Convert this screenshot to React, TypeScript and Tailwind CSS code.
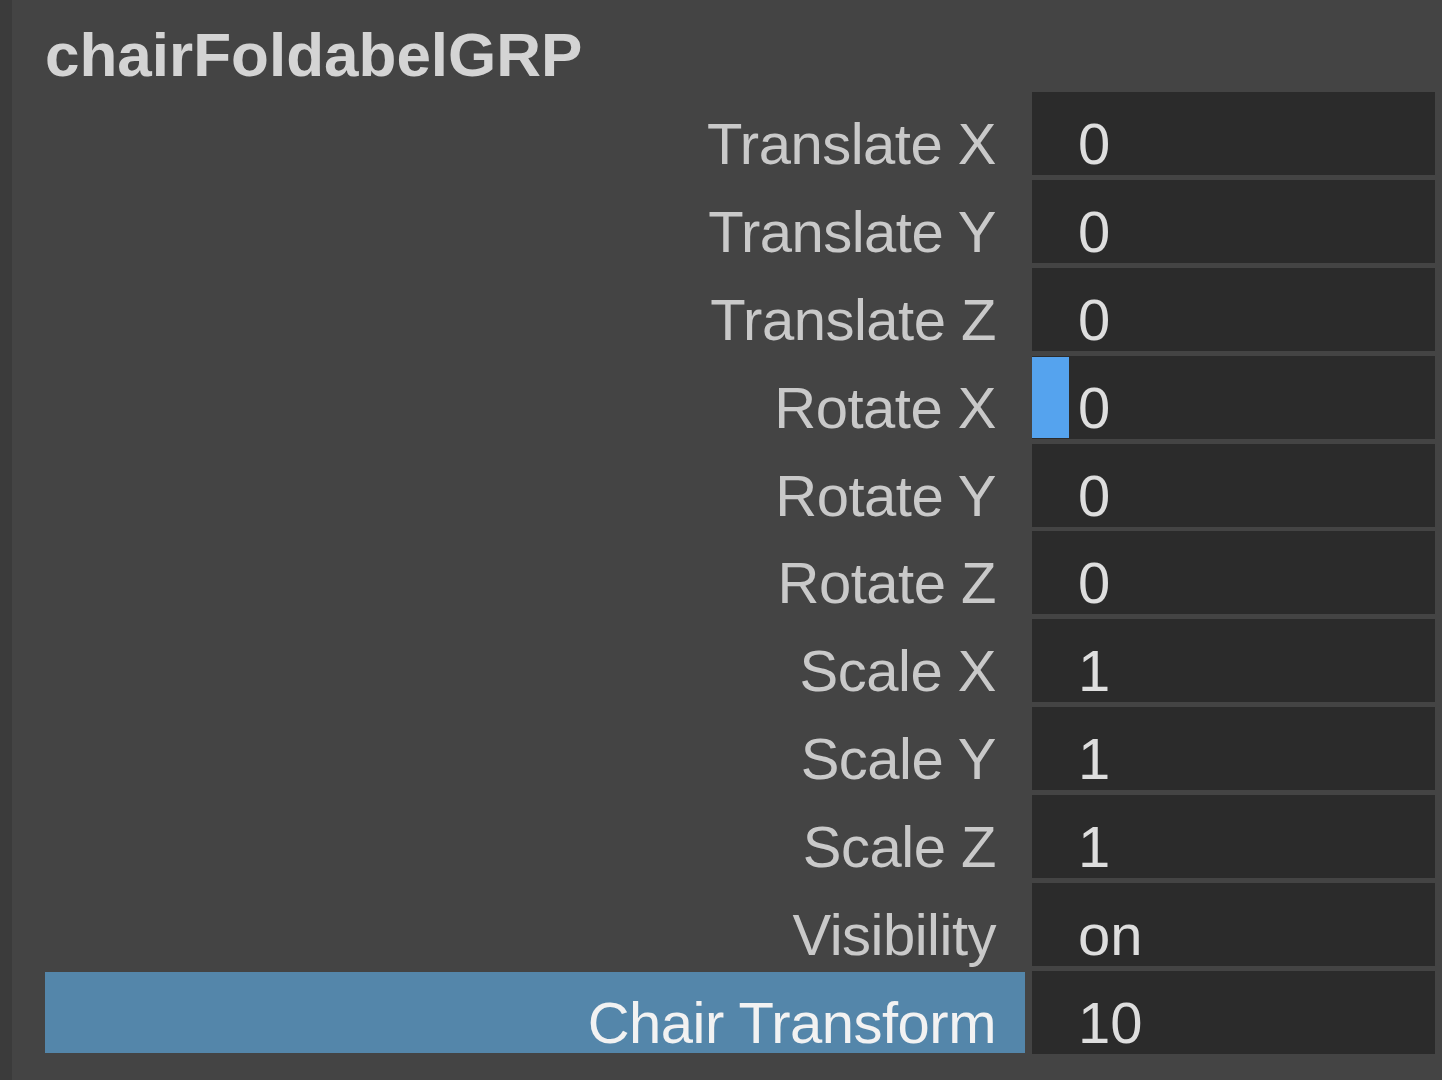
import React from "react";

const rows: { label: string; value: string; key?: boolean; selected?: boolean }[] = [
  { label: "Translate X", value: "0" },
  { label: "Translate Y", value: "0" },
  { label: "Translate Z", value: "0" },
  { label: "Rotate X", value: "0", key: true },
  { label: "Rotate Y", value: "0" },
  { label: "Rotate Z", value: "0" },
  { label: "Scale X", value: "1" },
  { label: "Scale Y", value: "1" },
  { label: "Scale Z", value: "1" },
  { label: "Visibility", value: "on" },
  { label: "Chair Transform", value: "10", selected: true },
];

export default function App() {
  return (
    <div
      className="flex w-[1442px] h-[1080px] bg-[#444444] overflow-hidden"
      style={{ fontFamily: '"Liberation Sans", Arial, sans-serif' }}
    >
      <div className="w-[12px] h-full bg-[#3b3b3b] shrink-0" />
      <div className="flex flex-col flex-1 pl-[33px] pr-[7px]">
        <div className="h-[92px] pt-[24px] leading-none text-[62px] font-bold text-[#d4d4d4]">
          chairFoldabelGRP
        </div>
        <div className="flex flex-col">
          {rows.map((r) => (
            <div key={r.label} className="flex h-[87.9px] gap-[7px]">
              <div
                className={
                  "flex-1 h-[81px] mt-[1px] flex justify-end pt-[22px] pr-[29px] leading-[58px] text-[58px] tracking-[-0.5px] " +
                  (r.selected ? "bg-[#5486aa] text-[#f2f2f2]" : "text-[#c9c9c9]")
                }
              >
                {r.label}
              </div>
              <div className="relative w-[403px] h-[83px] bg-[#2b2b2b] pt-[23px] pl-[46px] leading-[58px] text-[58px] text-[#dedede]">
                {r.key && (
                  <div className="absolute left-0 top-[1px] w-[37px] h-[81px] bg-[#55a3ee]" />
                )}
                {r.value}
              </div>
            </div>
          ))}
        </div>
      </div>
    </div>
  );
}
